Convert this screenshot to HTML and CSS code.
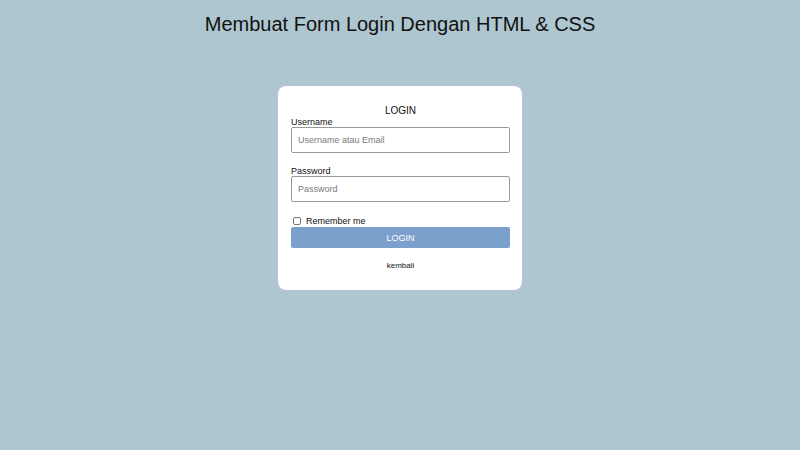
FILE: index.html
```html
<!DOCTYPE html>
<html lang="id">
<head>
<meta charset="utf-8">
<title>Membuat Form Login Dengan HTML &amp; CSS</title>
<link rel="stylesheet" href="styles.css">
</head>
<body>
<h1 class="title">Membuat Form Login Dengan HTML &amp; CSS</h1>
<div class="card">
  <p class="card-title">LOGIN</p>
  <form class="form">
    <label class="label" for="user">Username</label>
    <input class="input" id="user" type="text" placeholder="Username atau Email">
    <label class="label label-gap" for="pass">Password</label>
    <input class="input" id="pass" type="password" placeholder="Password">
    <label class="remember"><input class="check" type="checkbox"><span>Remember me</span></label>
    <button class="btn" type="button">LOGIN</button>
  </form>
  <a class="back" href="#">kembali</a>
</div>
</body>
</html>
```
FILE: styles.css
```css
* { box-sizing: border-box; }
body {
  margin: 0;
  background: #aec6cf;
  font-family: "Liberation Sans", Arial, sans-serif;
  color: #111;
  width: 800px;
  height: 450px;
  overflow: hidden;
}
.title {
  margin: 13px 0 0;
  font-size: 20px;
  line-height: 23px;
  font-weight: normal;
  text-align: center;
  color: #111;
}
.card {
  width: 244px;
  margin: 50px auto 0;
  background: #fff;
  border-radius: 8px;
  padding: 19px 12px 19px 13px;
  display: flex;
  flex-direction: column;
}
.card-title {
  margin: 0;
  font-size: 10px;
  line-height: 12px;
  text-align: center;
}
.form {
  display: flex;
  flex-direction: column;
}
.label {
  font-size: 9px;
  line-height: 10px;
  display: block;
}
.label-gap { margin-top: 13px; }
.input {
  height: 26px;
  margin: 0;
  border: 1px solid #999;
  border-radius: 2px;
  padding: 0 6px;
  font-family: inherit;
  font-size: 9px;
  color: #111;
  background: #fff;
}
.input::placeholder { color: #7a7a7a; }
.remember {
  margin-top: 14px;
  display: flex;
  align-items: center;
  font-size: 9px;
  line-height: 10px;
}
.check {
  appearance: none;
  -webkit-appearance: none;
  width: 8px;
  height: 8px;
  margin: 0 5px 0 2px;
  border: 1px solid #777;
  border-radius: 2px;
  background: #fff;
}
.btn {
  margin-top: 1px;
  height: 21px;
  border: none;
  border-radius: 2px;
  background: #7ba0cc;
  color: #fff;
  font-family: inherit;
  font-size: 9px;
  padding: 0;
}
.back {
  margin-top: 13px;
  font-size: 8px;
  line-height: 10px;
  text-align: center;
  color: #111;
  text-decoration: none;
}
```
